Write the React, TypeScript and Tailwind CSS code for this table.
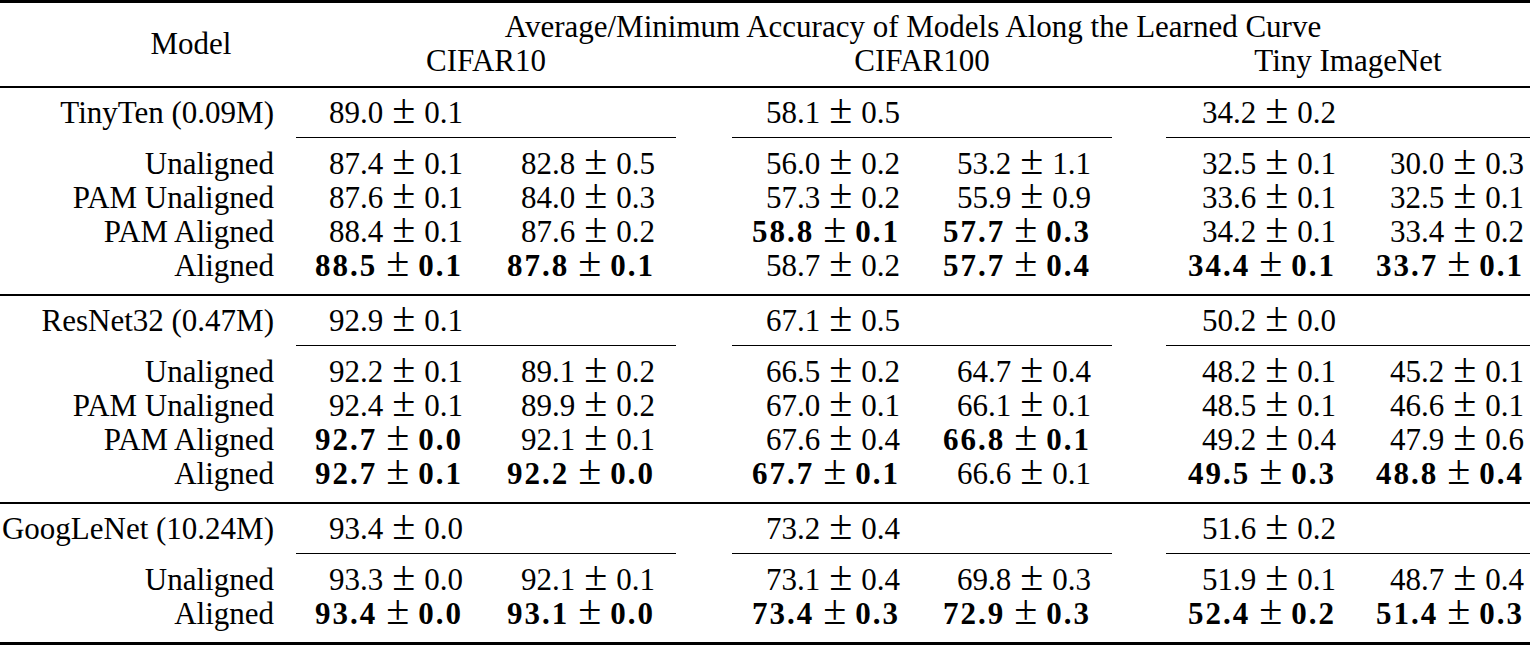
import React from 'react';

// "*" prefix marks a bold (best) entry
type Row = { label: string; vals: string[] };
type Block = { model: string; base: string[]; rows: Row[] };

const blocks: Block[] = [
  {
    model: 'TinyTen (0.09M)',
    base: ['89.0 0.1', '58.1 0.5', '34.2 0.2'],
    rows: [
      { label: 'Unaligned', vals: ['87.4 0.1', '82.8 0.5', '56.0 0.2', '53.2 1.1', '32.5 0.1', '30.0 0.3'] },
      { label: 'PAM Unaligned', vals: ['87.6 0.1', '84.0 0.3', '57.3 0.2', '55.9 0.9', '33.6 0.1', '32.5 0.1'] },
      { label: 'PAM Aligned', vals: ['88.4 0.1', '87.6 0.2', '*58.8 0.1', '*57.7 0.3', '34.2 0.1', '33.4 0.2'] },
      { label: 'Aligned', vals: ['*88.5 0.1', '*87.8 0.1', '58.7 0.2', '*57.7 0.4', '*34.4 0.1', '*33.7 0.1'] },
    ],
  },
  {
    model: 'ResNet32 (0.47M)',
    base: ['92.9 0.1', '67.1 0.5', '50.2 0.0'],
    rows: [
      { label: 'Unaligned', vals: ['92.2 0.1', '89.1 0.2', '66.5 0.2', '64.7 0.4', '48.2 0.1', '45.2 0.1'] },
      { label: 'PAM Unaligned', vals: ['92.4 0.1', '89.9 0.2', '67.0 0.1', '66.1 0.1', '48.5 0.1', '46.6 0.1'] },
      { label: 'PAM Aligned', vals: ['*92.7 0.0', '92.1 0.1', '67.6 0.4', '*66.8 0.1', '49.2 0.4', '47.9 0.6'] },
      { label: 'Aligned', vals: ['*92.7 0.1', '*92.2 0.0', '*67.7 0.1', '66.6 0.1', '*49.5 0.3', '*48.8 0.4'] },
    ],
  },
  {
    model: 'GoogLeNet (10.24M)',
    base: ['93.4 0.0', '73.2 0.4', '51.6 0.2'],
    rows: [
      { label: 'Unaligned', vals: ['93.3 0.0', '92.1 0.1', '73.1 0.4', '69.8 0.3', '51.9 0.1', '48.7 0.4'] },
      { label: 'Aligned', vals: ['*93.4 0.0', '*93.1 0.0', '*73.4 0.3', '*72.9 0.3', '*52.4 0.2', '*51.4 0.3'] },
    ],
  },
];

const Val: React.FC<{ v: string }> = ({ v }) => {
  const bold = v.startsWith('*');
  const [mean, err] = v.replace('*', '').split(' ');
  const num = bold ? 'font-bold tracking-[2px]' : '';
  return (
    <span className="whitespace-nowrap">
      <span className={num}>{mean}</span>
      <span className="mx-[9px] text-[42px] leading-[0px]">±</span>
      <span className={num}>{err}</span>
    </span>
  );
};

const cols = 'grid grid-cols-[296px_167px_192px_245px_191px_245px_188px] h-[34px]';

const ModelBlock: React.FC<{ block: Block }> = ({ block }) => (
  <div className="flex flex-col pt-[8px] pb-[11px]">
    <div className={cols}>
      <div className="text-right pr-[22px]">{block.model}</div>
      <div className="text-right"><Val v={block.base[0]} /></div>
      <div />
      <div className="text-right"><Val v={block.base[1]} /></div>
      <div />
      <div className="text-right"><Val v={block.base[2]} /></div>
      <div />
    </div>
    <div className="flex mt-[7px] mb-[9px]">
      <div className="ml-[296px] w-[380px] h-px bg-black" />
      <div className="ml-[56px] w-[380px] h-px bg-black" />
      <div className="ml-[54px] flex-1 h-px bg-black" />
    </div>
    {block.rows.map((r) => (
      <div key={r.label} className={cols}>
        <div className="text-right pr-[22px]">{r.label}</div>
        {r.vals.map((v, i) => (
          <div key={i} className="text-right">
            <Val v={v} />
          </div>
        ))}
      </div>
    ))}
  </div>
);

export default function App() {
  return (
    <div className="w-[1530px] h-[645px] bg-white text-black font-['Liberation_Serif',serif] text-[31px] leading-[34px] overflow-hidden">
      <div className="h-[3px] bg-black" />
      <div className="grid grid-cols-[296px_380px_56px_380px_54px_364px] pt-[7px] pb-[8px]">
        <div className="row-span-2 self-center pl-[86px] text-center">Model</div>
        <div className="col-span-5 text-center">
          Average/Minimum Accuracy of Models Along the Learned Curve
        </div>
        <div className="text-center">CIFAR10</div>
        <div />
        <div className="text-center">CIFAR100</div>
        <div />
        <div className="text-center">Tiny ImageNet</div>
      </div>
      {blocks.map((b, i) => (
        <React.Fragment key={b.model}>
          <div className="h-[2px] bg-black" />
          <ModelBlock block={b} />
          {i === blocks.length - 1 && <div className="h-[3px] bg-black" />}
        </React.Fragment>
      ))}
    </div>
  );
}
